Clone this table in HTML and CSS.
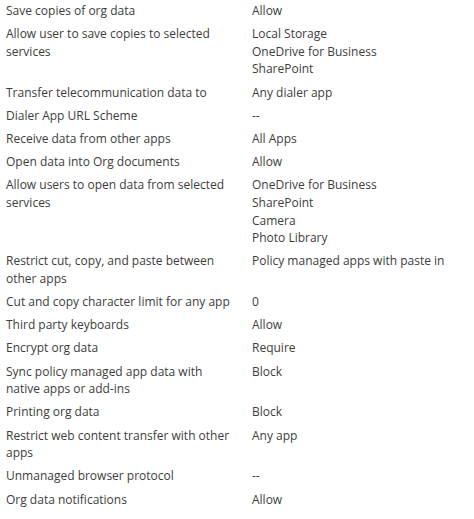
FILE: index.html
```html
<!DOCTYPE html>
<html>
<head>
<meta charset="utf-8">
<link rel="stylesheet" href="styles.css">
</head>
<body>
<div class="table">
  <div class="row"><div class="label">Save copies of org data</div><div class="value">Allow</div></div>
  <div class="row"><div class="label">Allow user to save copies to selected services</div><div class="value">Local Storage<br>OneDrive for Business<br>SharePoint</div></div>
  <div class="row"><div class="label">Transfer telecommunication data to</div><div class="value">Any dialer app</div></div>
  <div class="row"><div class="label">Dialer App URL Scheme</div><div class="value">--</div></div>
  <div class="row"><div class="label">Receive data from other apps</div><div class="value">All Apps</div></div>
  <div class="row"><div class="label">Open data into Org documents</div><div class="value">Allow</div></div>
  <div class="row"><div class="label">Allow users to open data from selected services</div><div class="value">OneDrive for Business<br>SharePoint<br>Camera<br>Photo Library</div></div>
  <div class="row"><div class="label">Restrict cut, copy, and paste between other apps</div><div class="value">Policy managed apps with paste in</div></div>
  <div class="row"><div class="label">Cut and copy character limit for any app</div><div class="value">0</div></div>
  <div class="row"><div class="label">Third party keyboards</div><div class="value">Allow</div></div>
  <div class="row"><div class="label">Encrypt org data</div><div class="value">Require</div></div>
  <div class="row"><div class="label">Sync policy managed app data with native apps or add-ins</div><div class="value">Block</div></div>
  <div class="row"><div class="label">Printing org data</div><div class="value">Block</div></div>
  <div class="row"><div class="label">Restrict web content transfer with other apps</div><div class="value">Any app</div></div>
  <div class="row"><div class="label">Unmanaged browser protocol</div><div class="value">--</div></div>
  <div class="row"><div class="label">Org data notifications</div><div class="value">Allow</div></div>
</div>
</body>
</html>
```
FILE: styles.css
```css
html, body {
  margin: 0;
  padding: 0;
  background: #ffffff;
}
.table {
  display: flex;
  flex-direction: column;
  gap: 5.6px;
  padding: 2px 6px 0 6px;
  font-family: "Open Sans", "Noto Sans", sans-serif;
  font-size: 12px;
  line-height: 17.6px;
  color: #3d3d3d;
}
.row {
  display: grid;
  grid-template-columns: 232px 1fr;
  column-gap: 14px;
}
.value {
  white-space: nowrap;
}
```
